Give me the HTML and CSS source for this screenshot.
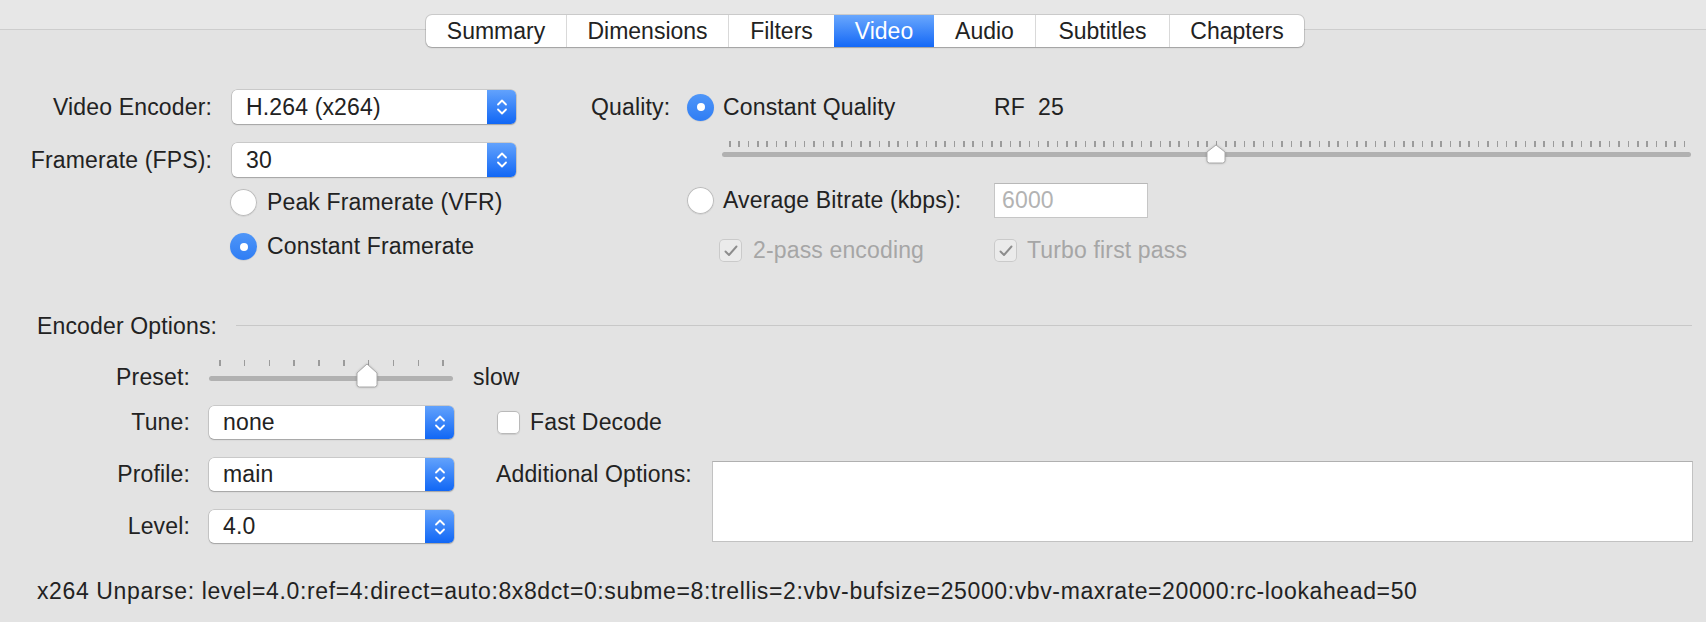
FILE: index.html
```html
<!DOCTYPE html>
<html>
<head>
<meta charset="utf-8">
<link rel="stylesheet" href="styles.css">
</head>
<body>
<div class="window">
  <div class="tabstrip">
    <div class="tabs">
      <div class="tab t-summary">Summary</div>
      <div class="tab t-dimensions">Dimensions</div>
      <div class="tab t-filters">Filters</div>
      <div class="tab t-video active">Video</div>
      <div class="tab t-audio">Audio</div>
      <div class="tab t-subtitles">Subtitles</div>
      <div class="tab t-chapters">Chapters</div>
    </div>
  </div>

  <div class="top">
    <div class="left">
      <div class="frow">
        <span class="lbl">Video Encoder:</span>
        <div class="popup p-top">
          <span class="ptext">H.264 (x264)</span>
          <span class="parrow"><svg width="12" height="20" viewBox="0 0 12 20"><path d="M2 7.5 L6 3.5 L10 7.5 M2 12.5 L6 16.5 L10 12.5" fill="none" stroke="#fff" stroke-width="1.8" stroke-linecap="round" stroke-linejoin="round"/></svg></span>
        </div>
      </div>
      <div class="frow frow2">
        <span class="lbl">Framerate (FPS):</span>
        <div class="popup p-top">
          <span class="ptext">30</span>
          <span class="parrow"><svg width="12" height="20" viewBox="0 0 12 20"><path d="M2 7.5 L6 3.5 L10 7.5 M2 12.5 L6 16.5 L10 12.5" fill="none" stroke="#fff" stroke-width="1.8" stroke-linecap="round" stroke-linejoin="round"/></svg></span>
        </div>
      </div>
      <div class="rrow rrow1"><span class="radio"></span><span>Peak Framerate (VFR)</span></div>
      <div class="rrow rrow2"><span class="radio on"></span><span>Constant Framerate</span></div>
    </div>

    <div class="right">
      <div class="q-lbl">Quality:</div>
      <div class="opt"><span class="radio on"></span><span>Constant Quality</span></div>
      <div class="rf"><span>RF</span><span>25</span></div>

      <div class="rfslider">
        <div class="rfticks"></div>
        <div class="track"></div>
        <svg class="knob knob-rf" style="left: 484px" width="20" height="20" viewBox="0 0 20 20"><path d="M10 1 L19 8 V16.5 Q19 19 16.5 19 H3.5 Q1 19 1 16.5 V8 Z" fill="#fff" stroke="#a9a9a9" stroke-width="1"/></svg>
      </div>

      <div class="opt r3"><span class="radio"></span><span>Average Bitrate (kbps):</span></div>
      <div class="tfield r3">6000</div>

      <div class="chk-cell r4 pass"><span class="check dis"><svg width="14" height="12" viewBox="0 0 14 12"><path d="M1.5 6.5 L5 10 L12.5 1.5" fill="none" stroke="#8d8d8d" stroke-width="1.9" stroke-linecap="round" stroke-linejoin="round"/></svg></span><span class="disabled">2-pass encoding</span></div>
      <div class="chk-cell r4 turbo"><span class="check dis"><svg width="14" height="12" viewBox="0 0 14 12"><path d="M1.5 6.5 L5 10 L12.5 1.5" fill="none" stroke="#8d8d8d" stroke-width="1.9" stroke-linecap="round" stroke-linejoin="round"/></svg></span><span class="disabled">Turbo first pass</span></div>
    </div>
  </div>

  <div class="enc-head"><span>Encoder Options:</span><span class="rule"></span></div>

  <div class="preset-row">
    <span class="blbl">Preset:</span>
    <div class="pslider">
      <div class="pticks"><i></i><i></i><i></i><i></i><i></i><i></i><i></i><i></i><i></i><i></i></div>
      <div class="track"></div>
      <svg class="knob knob-p" style="left: 147px" width="22" height="25" viewBox="0 0 22 25"><path d="M11 1 L21 10 V21.5 Q21 24 18.5 24 H3.5 Q1 24 1 21.5 V10 Z" fill="#fff" stroke="#a9a9a9" stroke-width="1"/></svg>
    </div>
    <span class="pval">slow</span>
  </div>

  <div class="opts">
    <span class="blbl g-r1">Tune:</span>
    <div class="popup p-bot g-r1">
      <span class="ptext">none</span>
      <span class="parrow"><svg width="12" height="20" viewBox="0 0 12 20"><path d="M2 7.5 L6 3.5 L10 7.5 M2 12.5 L6 16.5 L10 12.5" fill="none" stroke="#fff" stroke-width="1.8" stroke-linecap="round" stroke-linejoin="round"/></svg></span>
    </div>
    <div class="fast g-r1"><span class="check"></span><span>Fast Decode</span></div>

    <span class="blbl g-r2">Profile:</span>
    <div class="popup p-bot g-r2">
      <span class="ptext">main</span>
      <span class="parrow"><svg width="12" height="20" viewBox="0 0 12 20"><path d="M2 7.5 L6 3.5 L10 7.5 M2 12.5 L6 16.5 L10 12.5" fill="none" stroke="#fff" stroke-width="1.8" stroke-linecap="round" stroke-linejoin="round"/></svg></span>
    </div>
    <span class="addl g-r2">Additional Options:</span>
    <div class="tarea"></div>

    <span class="blbl g-r3">Level:</span>
    <div class="popup p-bot g-r3">
      <span class="ptext">4.0</span>
      <span class="parrow"><svg width="12" height="20" viewBox="0 0 12 20"><path d="M2 7.5 L6 3.5 L10 7.5 M2 12.5 L6 16.5 L10 12.5" fill="none" stroke="#fff" stroke-width="1.8" stroke-linecap="round" stroke-linejoin="round"/></svg></span>
    </div>
  </div>

  <div class="unparse">x264 Unparse: level=4.0:ref=4:direct=auto:8x8dct=0:subme=8:trellis=2:vbv-bufsize=25000:vbv-maxrate=20000:rc-lookahead=50</div>
</div>
</body>
</html>
```
FILE: styles.css
```css
html, body {
  margin: 0;
  padding: 0;
}
body {
  font-family: "Liberation Sans", Arial, sans-serif;
  font-size: 23px;
  color: #222;
  line-height: 27px;
  letter-spacing: 0.15px;
}
.window {
  width: 1706px;
  height: 622px;
  overflow: hidden;
  background: linear-gradient(to bottom, #e7e7e7 0, #e7e7e7 30px, #e3e3e3 30px);
  padding-top: 15px;
  box-sizing: border-box;
}

/* tabs */
.tabstrip {
  height: 32px;
  background: linear-gradient(to bottom, transparent 14.5px, #cdcdcd 14.5px, #cdcdcd 15.5px, transparent 15.5px);
}
.tabs {
  margin-left: 426px;
  display: flex;
  width: 878px;
  height: 32px;
  background: #fff;
  border-radius: 6px;
  overflow: hidden;
  box-shadow: 0 0 0 1px rgba(0,0,0,0.12), 0 1px 1.5px rgba(0,0,0,0.2);
}
.tab {
  box-sizing: border-box;
  height: 32px;
  line-height: 32px;
  text-align: center;
  border-left: 1px solid #d9d9d9;
  letter-spacing: 0;
}
.tab.t-summary { border-left: none; width: 140px; }
.t-dimensions { width: 162px; }
.t-filters { width: 106px; }
.t-video { width: 100px; }
.t-audio { width: 101px; }
.t-subtitles { width: 134px; }
.t-chapters { width: 135px; }
.tab.active {
  background: linear-gradient(to bottom, #69a7fd, #1468f6);
  color: #fff;
  border-left: none;
}
.tab.active + .tab { border-left: none; }

/* popups */
.popup {
  display: flex;
  background: #fff;
  border-radius: 5px;
  box-shadow: 0 0 0 0.5px rgba(0,0,0,0.22), 0 1px 1.5px rgba(0,0,0,0.2);
}
.p-top { width: 284px; height: 34px; }
.p-bot { width: 245px; height: 33px; }
.ptext {
  flex: 1;
  padding-left: 14px;
  display: flex;
  align-items: center;
}
.parrow {
  width: 29px;
  border-radius: 0 5px 5px 0;
  background: linear-gradient(to bottom, #62a2fc, #1167f5);
  display: flex;
  align-items: center;
  justify-content: center;
}

/* radios & checks */
.radio {
  width: 27px;
  height: 27px;
  box-sizing: border-box;
  border-radius: 50%;
  background: #fff;
  box-shadow: inset 0 0 0 1px #bcbcbc, 0 0.5px 1px rgba(0,0,0,0.12);
  flex: none;
  display: flex;
  align-items: center;
  justify-content: center;
}
.radio.on {
  background: linear-gradient(to bottom, #4f96f8, #2f7df4);
  box-shadow: 0 0.5px 1px rgba(0,0,0,0.15);
}
.radio.on::after {
  content: "";
  width: 8px;
  height: 8px;
  border-radius: 50%;
  background: #fff;
}
.check {
  width: 23px;
  height: 23px;
  box-sizing: border-box;
  border-radius: 5px;
  background: #fff;
  box-shadow: inset 0 0 0 1px #b9b9b9, 0 0.5px 1px rgba(0,0,0,0.1);
  flex: none;
  display: flex;
  align-items: center;
  justify-content: center;
}
.check.dis {
  background: #ebebeb;
  box-shadow: inset 0 0 0 1px #cacaca;
}
.disabled { color: #a6a6a6; }

/* top section */
.top {
  display: flex;
  margin-top: 43px;
}
.left {
  width: 516px;
  flex: none;
}
.frow {
  display: flex;
  align-items: center;
  height: 34px;
}
.frow2 { margin-top: 19px; }
.lbl {
  width: 212px;
  margin-right: 20px;
  text-align: right;
  flex: none;
}
.rrow {
  display: flex;
  align-items: center;
  gap: 10px;
  height: 27px;
  padding-left: 230px;
}
.rrow1 { margin-top: 12px; }
.rrow2 { margin-top: 17px; }

.right {
  margin-left: 75px;
  padding-right: 15px;
  flex: 1;
  display: grid;
  grid-template-columns: 96px 307px 1fr;
  grid-template-rows: 34px 59px 35px 44px;
}
.q-lbl {
  grid-column: 1;
  grid-row: 1;
  align-self: center;
}
.opt {
  grid-column: 2;
  grid-row: 1;
  display: flex;
  align-items: center;
  gap: 9px;
}
.opt.r3 { grid-row: 3; }
.rf {
  grid-column: 3;
  grid-row: 1;
  display: flex;
  align-items: center;
  gap: 13px;
}
.rfslider {
  grid-column: 2 / 4;
  grid-row: 2;
  margin-left: 35px;
  position: relative;
  padding-top: 17px;
}
.rfticks {
  margin-left: 7px;
  width: 956.2px;
  height: 6px;
  background: repeating-linear-gradient(to right, #9b9b9b 0, #9b9b9b 1.6px, transparent 1.6px, transparent 9.36px);
}
.track {
  height: 5px;
  border-radius: 3px;
  background: #b1b1b1;
}
.rfslider .track { margin-top: 5px; }
.knob {
  position: absolute;
  filter: drop-shadow(0 0.5px 0.8px rgba(0,0,0,0.2));
}
.knob-rf { top: 20px; }
.tfield {
  grid-column: 3;
  grid-row: 3;
  width: 154px;
  box-sizing: border-box;
  background: #fff;
  border: 1px solid #c6c6c6;
  border-top-color: #b8b8b8;
  color: #b3b3b3;
  padding-left: 7px;
  display: flex;
  align-items: center;
}
.chk-cell {
  grid-row: 4;
  align-self: end;
  display: flex;
  align-items: center;
  height: 23px;
}
.chk-cell.pass {
  grid-column: 2;
  padding-left: 32px;
  gap: 11px;
}
.chk-cell.turbo {
  grid-column: 3;
  gap: 10px;
}

/* encoder options */
.enc-head {
  margin-top: 50px;
  height: 28px;
  display: flex;
  align-items: center;
  padding: 0 14px 0 37px;
}
.rule {
  flex: 1;
  height: 1px;
  background: #c8c8c8;
  margin-left: 19px;
  margin-top: -2px;
}
.preset-row {
  margin-top: 20px;
  height: 34px;
  display: flex;
  align-items: flex-start;
}
.blbl {
  width: 190px;
  padding-right: 19px;
  text-align: right;
  line-height: 34px;
  flex: none;
}
.pslider {
  width: 244px;
  margin-top: -1px;
  position: relative;
  padding-top: 1px;
}
.pticks {
  display: flex;
  justify-content: space-between;
  padding: 0 9px 0 10px;
  height: 6px;
}
.pticks i {
  width: 1.6px;
  height: 6px;
  background: #9b9b9b;
}
.pslider .track { margin-top: 9.5px; }
.knob-p { top: 4px; }
.pval {
  margin-left: 20px;
  line-height: 34px;
}

.opts {
  margin-top: 12px;
  display: grid;
  grid-template-columns: 209px 287px 216px 1fr;
  grid-template-rows: 33px 33px 33px;
  row-gap: 19px;
  padding-right: 13px;
}
.opts .blbl {
  grid-column: 1;
  width: auto;
  line-height: 33px;
}
.opts .popup { grid-column: 2; }
.g-r1 { grid-row: 1; }
.g-r2 { grid-row: 2; }
.g-r3 { grid-row: 3; }
.fast {
  grid-column: 3;
  display: flex;
  align-items: center;
  gap: 10px;
  padding-left: 1px;
}
.addl {
  grid-column: 3;
  align-self: center;
}
.tarea {
  grid-column: 4;
  grid-row: 2 / 4;
  margin-top: 3px;
  height: 81px;
  box-sizing: border-box;
  background: #fff;
  border: 1px solid #c2c2c2;
  border-top-color: #b0b0b0;
}

.unparse {
  margin-top: 35px;
  padding-left: 37px;
  white-space: nowrap;
  letter-spacing: 0.62px;
}
```
